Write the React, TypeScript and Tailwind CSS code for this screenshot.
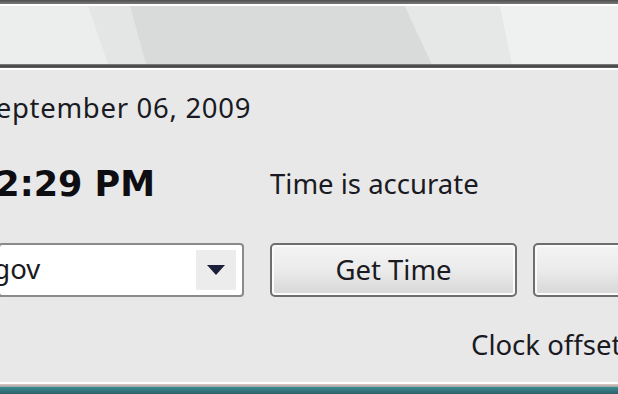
import React from 'react';

const GlassHeader: React.FC = () => (
    <div className="relative h-[58px] bg-[#eceeee] overflow-hidden">
        <svg className="absolute inset-0" width="618" height="58" viewBox="0 0 618 58">
            <polygon points="88,0 150,0 165,58 108,58" fill="#e4e6e6" />
            <polygon points="130,0 405,0 432,58 146,58" fill="#d9dbdb" />
            <polygon points="405,0 500,0 512,58 432,58" fill="#e6e8e8" />
            <polygon points="500,0 618,0 618,58 512,58" fill="#eff1f1" />
        </svg>
    </div>
);

const DropArrow: React.FC = () => (
    <svg width="18" height="10" viewBox="0 0 18 10">
        <polygon points="0,0 18,0 9,10" fill="#1b1f3a" />
    </svg>
);

export default function App() {
    return (
        <div className="w-[618px] h-[394px] overflow-hidden flex flex-col bg-[#e8e8e8] font-['Noto_Sans',sans-serif] text-[#1a1a22]">
            <div className="h-[4px] bg-gradient-to-b from-[#4e4e4e] to-[#7a7a7a]" />
            <div className="h-[2px] bg-white" />
            <GlassHeader />
            <div className="h-[4px] bg-gradient-to-b from-[#8a8a8a] via-[#3e3e3e] to-[#6a6a6a]" />
            <div className="h-[2px] bg-white" />

            <div className="flex-1 flex flex-col">
                <div className="ml-[-20px] mt-[20px] h-[36px] whitespace-nowrap text-[27.5px] tracking-[0.7px] leading-[36px]">
                    September 06, 2009
                </div>

                <div className="flex items-center mt-[38px] h-[40px]">
                    <div className="w-[270px] shrink-0 ml-[-29px] whitespace-nowrap font-['DejaVu_Sans',sans-serif] font-bold text-[35px] leading-[40px] text-[#0d0d12]">
                        12:29 PM
                    </div>
                    <div className="ml-[29px] whitespace-nowrap text-[27.5px] leading-[40px]">Time is accurate</div>
                </div>

                <div className="flex items-center mt-[39px] h-[54px]">
                    <div className="w-[246px] shrink-0 ml-[-2px] h-[54px] rounded-[4px] border-2 border-[#8a8a8a] bg-white flex items-center justify-between pr-[6px]">
                        <span className="text-[27.5px] leading-none -ml-[14px] mb-[2px] whitespace-nowrap">.gov</span>
                        <div className="w-[40px] h-[40px] bg-[#ececec] flex items-center justify-center">
                            <DropArrow />
                        </div>
                    </div>
                    <button className="ml-[26px] shrink-0 w-[247px] h-[54px] rounded-[5px] border-2 border-[#6e6e6e] bg-gradient-to-b from-[#f4f4f4] via-[#ebebeb] to-[#d7d7d7] shadow-[inset_0_0_0_2px_#fbfbfb] text-[27.5px] leading-none text-[#1a1a22]">
                        Get Time
                    </button>
                    <button className="ml-[16px] w-[120px] h-[54px] shrink-0 rounded-[5px] border-2 border-[#6e6e6e] bg-gradient-to-b from-[#f4f4f4] via-[#ebebeb] to-[#d7d7d7] shadow-[inset_0_0_0_2px_#fbfbfb]" />
                </div>

                <div className="flex mt-[30px] h-[36px]">
                    <div className="ml-[471px] shrink-0 whitespace-nowrap text-[27.5px] leading-[36px]">Clock offset: 0.000 s</div>
                </div>

                <div className="flex-1" />
                <div className="h-[2px] bg-white" />
                <div className="h-[3px] bg-gradient-to-b from-[#e0c8c4] to-[#9fa5a5]" />
                <div className="h-[7px] bg-gradient-to-b from-[#3a8c92] to-[#2e5f68]" />
            </div>
        </div>
    );
}
